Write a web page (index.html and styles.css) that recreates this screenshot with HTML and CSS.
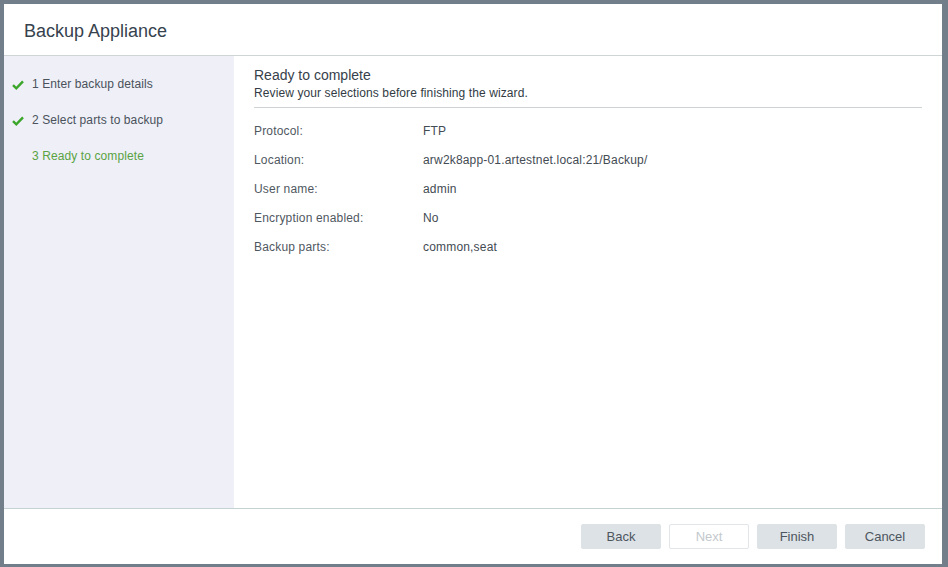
FILE: index.html
```html
<!DOCTYPE html>
<html>
<head>
<meta charset="utf-8">
<link rel="stylesheet" href="styles.css">
</head>
<body>
<div class="dialog">
  <div class="header"><h1 class="title">Backup Appliance</h1></div>
  <div class="main">
    <nav class="steps">
      <div class="step done">
        <svg class="check" width="12" height="10" viewBox="0 0 12 10"><path d="M1 5.2 L4.3 8.3 L11 1.3" fill="none" stroke="#3ba62a" stroke-width="2.4"/></svg>
        <span>1 Enter backup details</span>
      </div>
      <div class="step done">
        <svg class="check" width="12" height="10" viewBox="0 0 12 10"><path d="M1 5.2 L4.3 8.3 L11 1.3" fill="none" stroke="#3ba62a" stroke-width="2.4"/></svg>
        <span>2 Select parts to backup</span>
      </div>
      <div class="step current">
        <span class="nocheck"></span>
        <span>3 Ready to complete</span>
      </div>
    </nav>
    <section class="content">
      <div class="page-head">
        <div class="page-title">Ready to complete</div>
        <div class="page-sub">Review your selections before finishing the wizard.</div>
      </div>
      <div class="summary">
        <div class="row"><span class="label">Protocol:</span><span class="value">FTP</span></div>
        <div class="row"><span class="label">Location:</span><span class="value">arw2k8app-01.artestnet.local:21/Backup/</span></div>
        <div class="row"><span class="label">User name:</span><span class="value">admin</span></div>
        <div class="row"><span class="label">Encryption enabled:</span><span class="value">No</span></div>
        <div class="row"><span class="label">Backup parts:</span><span class="value">common,seat</span></div>
      </div>
    </section>
  </div>
  <div class="footer">
    <button class="btn">Back</button>
    <button class="btn disabled">Next</button>
    <button class="btn">Finish</button>
    <button class="btn">Cancel</button>
  </div>
</div>
</body>
</html>
```

FILE: styles.css
```css
html, body {
  margin: 0;
  padding: 0;
}
body {
  width: 948px;
  height: 567px;
  background: #737e8b;
  font-family: "Liberation Sans", Arial, sans-serif;
  padding: 4px 6px 3px 4px;
  box-sizing: border-box;
  overflow: hidden;
}
.dialog {
  width: 938px;
  height: 560px;
  background: #ffffff;
  display: flex;
  flex-direction: column;
  box-sizing: border-box;
}
.header {
  height: 51px;
  border-bottom: 1px solid #cfd4d6;
  display: flex;
  align-items: center;
  padding-left: 20px;
  flex-shrink: 0;
}
.title {
  margin: 0;
  font-size: 18px;
  font-weight: normal;
  color: #36424e;
  padding-top: 3px;
}
.main {
  flex: 1;
  display: flex;
  min-height: 0;
}
.steps {
  width: 230px;
  background: #eeeff7;
  padding-top: 20px;
  box-sizing: border-box;
  flex-shrink: 0;
}
.step {
  display: flex;
  align-items: center;
  height: 16px;
  margin-bottom: 20px;
  padding-left: 8px;
  font-size: 12px;
  color: #4a525b;
  letter-spacing: 0.1px;
}
.check, .nocheck {
  width: 12px;
  height: 10px;
  margin-right: 8px;
  margin-top: 2px;
  flex-shrink: 0;
  display: block;
}
.step.current {
  color: #5aa343;
}
.content {
  flex: 1;
  padding: 11px 20px 0 20px;
}
.page-head {
  border-bottom: 1px solid #cdd2d4;
  padding-bottom: 6px;
}
.page-title {
  font-size: 14px;
  color: #37414b;
  line-height: 16px;
}
.page-sub {
  font-size: 12px;
  color: #323b44;
  line-height: 15px;
  margin-top: 3px;
  letter-spacing: 0.1px;
}
.summary {
  padding-top: 15px;
}
.row {
  display: flex;
  height: 29px;
  font-size: 12px;
  line-height: 16px;
  letter-spacing: 0.18px;
}
.label {
  width: 169px;
  color: #50585f;
}
.value {
  color: #434b53;
}
.footer {
  height: 56px;
  border-top: 1px solid #c4d2d3;
  display: flex;
  align-items: center;
  justify-content: flex-end;
  gap: 8px;
  padding-right: 17px;
  flex-shrink: 0;
  box-sizing: border-box;
}
.btn {
  width: 80px;
  height: 25px;
  border: 1px solid #dde2e5;
  border-radius: 2px;
  background: #dde2e6;
  font-family: "Liberation Sans", Arial, sans-serif;
  font-size: 13px;
  color: #4d565f;
  padding: 0;
}
.btn.disabled {
  background: #ffffff;
  border-color: #e2e6e9;
  color: #c3c9cd;
}
```
